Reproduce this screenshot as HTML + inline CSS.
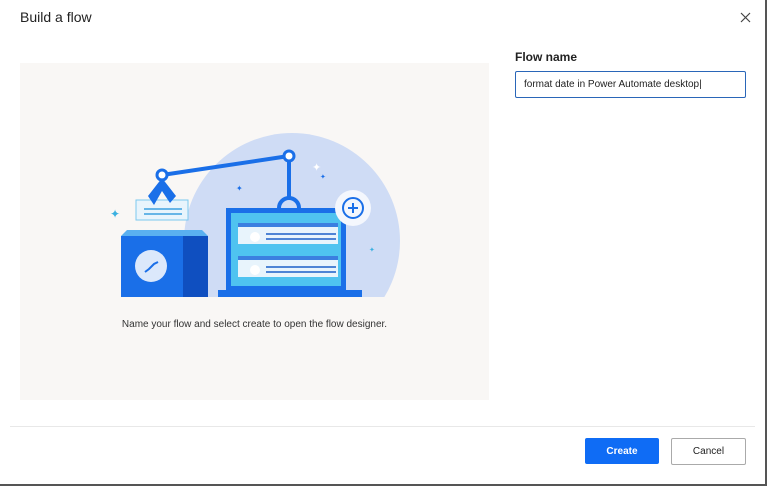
<!DOCTYPE html>
<html><head><meta charset="utf-8"><style>
html,body{margin:0;padding:0;width:768px;height:486px;overflow:hidden;background:#fff;font-family:"Segoe UI","Liberation Sans",sans-serif;}
.dlg{position:absolute;left:0;top:0;width:765px;height:484px;background:#fff;border-right:2px solid #555;border-bottom:2px solid #555;}
.title{position:absolute;left:20px;top:9px;font-size:14px;color:#222;}
.x{position:absolute;left:740px;top:12px;}
.panel{position:absolute;left:20px;top:63px;width:469px;height:337px;background:#f9f7f5;}
.cap{position:absolute;left:0;width:469px;top:256px;text-align:center;font-size:10px;color:#333;}
.lbl{position:absolute;left:515px;top:50px;font-size:12px;font-weight:bold;color:#222;}
.inp{position:absolute;left:515px;top:71px;width:231px;height:27px;border:1px solid #2a66b8;border-radius:2px;box-sizing:border-box;font-size:10px;color:#222;padding:7px 0 0 8px;}
.sep{position:absolute;left:10px;right:10px;top:426px;border-top:1px solid #e8e8e8;}
.b1{position:absolute;left:585px;top:438px;width:74px;height:26px;background:#0f6cf5;color:#fff;border-radius:2px;font-size:10px;text-align:center;line-height:27px;font-weight:bold;}
.b2{position:absolute;left:671px;top:438px;width:75px;height:27px;border:1px solid #aaa;box-sizing:border-box;border-radius:2px;color:#222;font-size:10px;text-align:center;line-height:26px;}
</style></head><body>
<div class="dlg">
<div class="title">Build a flow</div>
<svg class="x" width="11" height="11"><path d="M1 1L10 10M10 1L1 10" stroke="#444" stroke-width="1.2"/></svg>
<div class="panel">
<svg width="469" height="250" style="position:absolute;left:0;top:0">
<defs><clipPath id="c"><rect x="0" y="0" width="469" height="234"/></clipPath></defs>
<circle cx="272" cy="178" r="108" fill="#cfdcf5" clip-path="url(#c)"/>
<rect x="206" y="145" width="120" height="82" fill="#1a6fe8"/>
<rect x="211" y="150" width="110" height="73" fill="#4fc3f0"/>
<rect x="198" y="227" width="144" height="7" fill="#1a6fe8"/>
<rect x="218" y="160" width="100" height="21" fill="#e8f4fc"/><rect x="218" y="160" width="100" height="4" fill="#3b7fe0"/>
<rect x="218" y="193" width="100" height="21" fill="#e8f4fc"/><rect x="218" y="193" width="100" height="4" fill="#3b7fe0"/>
<circle cx="235" cy="174" r="5" fill="#fff"/><circle cx="235" cy="207" r="5" fill="#fff"/>
<path d="M246 171h70M246 176h70M246 204h70M246 209h70" stroke="#1a5fc8" stroke-width="1.5"/>
<path d="M142 112L269 93V135" stroke="#1a6fe8" stroke-width="4" fill="none"/>
<circle cx="269" cy="93" r="5" fill="#fff" stroke="#1a6fe8" stroke-width="3"/>
<circle cx="142" cy="112" r="5" fill="#fff" stroke="#1a6fe8" stroke-width="3"/>
<path d="M259 145a10 10 0 0 1 20 0" stroke="#1a6fe8" stroke-width="4" fill="none"/>
<rect x="116" y="137" width="52" height="20" fill="#e8f4fc" stroke="#7cc8ee"/>
<path d="M124 146h38M124 151h38" stroke="#3aa0e0" stroke-width="1.5"/>
<path d="M142 115L128 133L134 142L142 128L150 140L156 133Z" fill="#1a6fe8"/>
<rect x="101" y="173" width="62" height="61" fill="#1a6fe8"/>
<rect x="163" y="173" width="25" height="61" fill="#0f4fc0"/>
<path d="M101 173l6-6h75l6 6z" fill="#5ab0f0"/>
<circle cx="131" cy="203" r="16" fill="#dbe8fb"/>
<path d="M125 209l4-3 5-5 4-2" stroke="#1a6fe8" stroke-width="2" fill="none"/>
<circle cx="333" cy="145" r="18" fill="#f4f7fd"/>
<circle cx="333" cy="145" r="10" fill="none" stroke="#1a6fe8" stroke-width="2"/>
<path d="M333 140v10M328 145h10" stroke="#1a6fe8" stroke-width="2"/>
<text x="90" y="155" fill="#3ab0e0" font-size="12">✦</text>
<text x="216" y="128" fill="#1a6fe8" font-size="8">✦</text>
<text x="292" y="108" fill="#fff" font-size="11">✦</text>
<text x="300" y="116" fill="#1a6fe8" font-size="7">✦</text>
<text x="349" y="189" fill="#3ab0e0" font-size="7">✦</text>
</svg>
<div class="cap">Name your flow and select create to open the flow designer.</div>
</div>
<div class="lbl">Flow name</div>
<div class="inp">format date in Power Automate desktop|</div>
<div class="sep"></div>
<div class="b1">Create</div>
<div class="b2">Cancel</div>
</div>
</body></html>
